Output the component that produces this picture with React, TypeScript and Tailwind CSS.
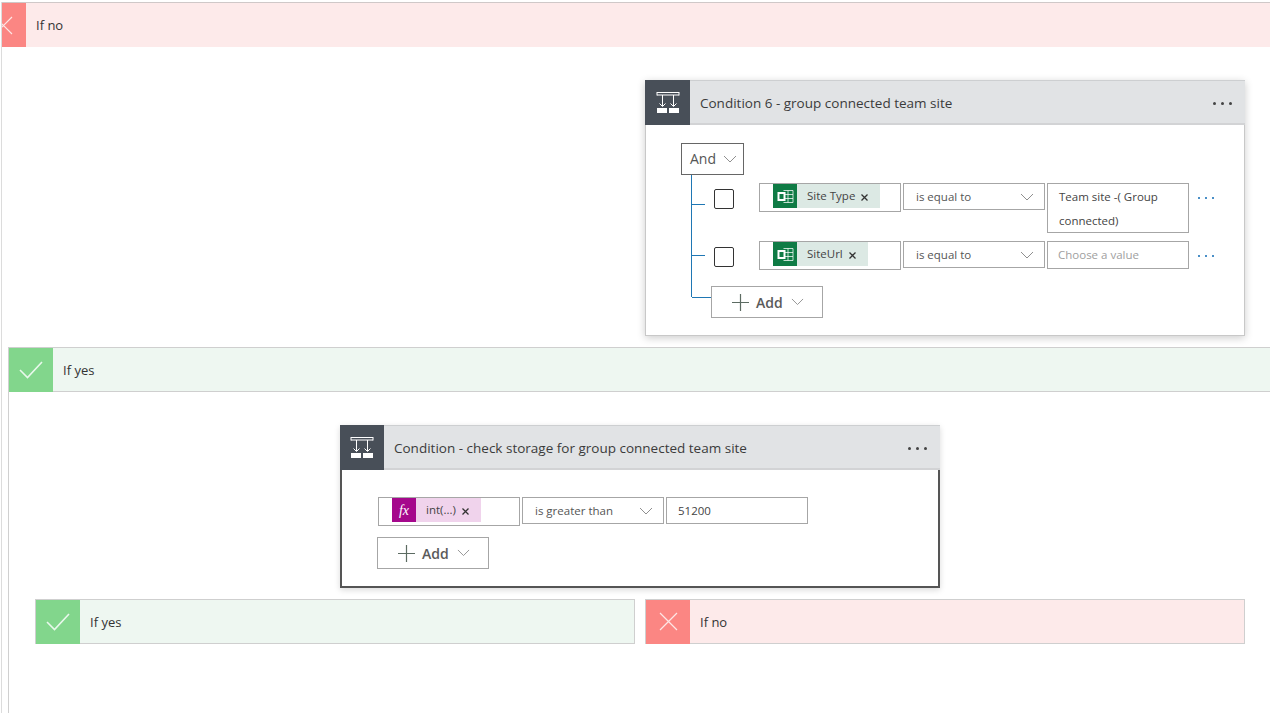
import React from 'react';

const ConditionIcon = () => (
  <svg width="24" height="24" viewBox="0 0 24 24" fill="none" stroke="#fff" strokeWidth="1">
    <path d="M1 1.500h22M1 4h22M1 1v3.500M23 1v3.500" />
    <path d="M6.500 4v11M17.500 4v11" />
    <path d="M3.500 12.500l3 3 3-3M14.500 12.500l3 3 3-3" />
    <rect x="1" y="17" width="10" height="5" fill="#fff" stroke="none" />
    <rect x="13" y="17" width="10" height="5" fill="#fff" stroke="none" />
  </svg>
);

const Chevron = ({ size = 14, color = '#8f8f8f' }: { size?: number; color?: string }) => (
  <svg width={size} height={size / 2 + 1} viewBox="0 0 14 8" fill="none" stroke={color} strokeWidth="1">
    <path d="M1 1l6 6 6-6" />
  </svg>
);

const Cross = ({ size = 19 }: { size?: number }) => (
  <svg width={size} height={size} viewBox="0 0 19 19" fill="none" stroke="#fde7e6" strokeWidth="1.200">
    <path d="M1 1l17 17M18 1L1 18" />
  </svg>
);

const Check = () => (
  <svg width="24" height="18" viewBox="0 0 24 18" fill="none" stroke="#e9f8ec" strokeWidth="1.600">
    <path d="M1 9l7.500 7.500L23 1" />
  </svg>
);

const ExcelIcon = () => (
  <svg width="17" height="15" viewBox="0 0 17 15" fill="none" stroke="#fff" strokeOpacity="0.75" strokeWidth="1">
    <path d="M6.500 1.500h9.500v12H6.500M11 1.500v12M6.500 5.500H16M6.500 9.500H16" />
    <rect x="0.500" y="3" width="8" height="9" fill="#fff" stroke="none" />
    <rect x="2.500" y="5" width="4" height="5" fill="#0f7b45" stroke="none" />
  </svg>
);

const Dots = ({ className }: { className: string }) => (
  <div className={`flex gap-[5px] ${className}`}>
    <span className="w-[3px] h-[3px] rounded-full bg-current" />
    <span className="w-[3px] h-[3px] rounded-full bg-current" />
    <span className="w-[3px] h-[3px] rounded-full bg-current" />
  </div>
);

const SmallDots = () => (
  <div className="flex gap-[5px] ml-[9px] mt-[14px] text-[#4a8fc7]">
    <span className="w-[2px] h-[2px] bg-current" />
    <span className="w-[2px] h-[2px] bg-current" />
    <span className="w-[2px] h-[2px] bg-current" />
  </div>
);

const Branch = ({ kind, className = '' }: { kind: 'yes' | 'no'; className?: string }) => (
  <div
    className={`h-[45px] flex items-center border-y border-[#cfcfcf] ${kind === 'yes' ? 'bg-[#eef7f1]' : 'bg-[#fdeaea]'} ${className}`}
  >
    <div className={`w-[44px] h-[44px] flex items-center justify-center shrink-0 ${kind === 'yes' ? 'bg-[#82d68c]' : 'bg-[#fb8683]'}`}>
      {kind === 'yes' ? <Check /> : <Cross />}
    </div>
    <span className="ml-[10px] mt-[2px] text-[13px] text-[#333]">{kind === 'yes' ? 'If yes' : 'If no'}</span>
  </div>
);

const CardHeader = ({ title, narrow = false }: { title: string; narrow?: boolean }) => (
  <div className="h-[45px] flex items-center bg-[#e1e3e5] shadow-[inset_0_1px_0_#cdcfd1,inset_0_-2px_0_#d2d3d5]">
    <div className={`${narrow ? 'w-[44px]' : 'w-[45px]'} h-[45px] bg-[#484f58] flex items-center justify-center shrink-0`}>
      <ConditionIcon />
    </div>
    <span className="ml-[10px] mt-[2px] text-[13.5px] text-[#3b3b3b]">{title}</span>
    <Dots className="ml-auto mr-[13px] mt-[2px] text-[#444]" />
  </div>
);

const TagInput = ({ kind, label }: { kind: 'excel' | 'fx'; label: string }) => (
  <div className="w-[142px] h-[29px] border border-[#a6a6a6] flex items-start pl-[13px] shrink-0">
    <div className={`h-[24px] flex items-center ${kind === 'excel' ? 'bg-[#dce9e4]' : 'bg-[#f0d3ec]'}`}>
      <div className={`w-[24px] h-[24px] flex items-center justify-center ${kind === 'excel' ? 'bg-[#0f7b45]' : 'bg-[#a5088c]'}`}>
        {kind === 'excel' ? (
          <ExcelIcon />
        ) : (
          <span className="font-['Liberation_Serif',serif] italic text-[14px] text-white">fx</span>
        )}
      </div>
      <span className="ml-[10px] text-[11.5px] text-[#444] leading-none">{label}</span>
      <svg className="ml-[6px] mr-[12px] mt-[2px]" width="7" height="7" viewBox="0 0 7 7" fill="none" stroke="#333" strokeWidth="1.300">
        <path d="M0.500 0.500l6 6M6.500 0.500l-6 6" />
      </svg>
    </div>
  </div>
);

const Operator = ({ label }: { label: string }) => (
  <div className="w-[142px] h-[27px] ml-[2px] border border-[#a6a6a6] flex items-center pl-[12px] pr-[10px] shrink-0">
    <span className="text-[11.5px] text-[#555] mt-[1px]">{label}</span>
    <span className="ml-auto">
      <Chevron />
    </span>
  </div>
);

const AddButton = () => (
  <div className="w-[112px] h-[32px] border border-[#a6a6a6] bg-white flex items-center pl-[20px]">
    <svg width="17" height="17" viewBox="0 0 17 17" fill="none" stroke="#5c6b62" strokeWidth="1.200">
      <path d="M8.500 0v17M0 8.500h17" />
    </svg>
    <span className="ml-[7px] text-[14px] font-semibold text-[#5a5a5a]">Add</span>
    <span className="ml-[8px]">
      <Chevron size={13} />
    </span>
  </div>
);

const Checkbox = () => (
  <div className="w-[20px] h-[20px] ml-[9px] mt-[6px] border border-[#333] rounded-[2px] shrink-0" />
);

const Tick = ({ className }: { className: string }) => (
  <div className={`w-[13px] h-px bg-[#1f77b4] shrink-0 ${className}`} />
);

export default function App() {
  return (
    <div className="w-[1270px] h-[713px] overflow-hidden bg-white pl-px font-['Open_Sans',sans-serif]">
      <div className="h-full border-l border-[#dcdcdc]">
        {/* outer If no, the icon is cut off by the scroll position */}
        <div className="mt-[2px] h-[45px] flex items-center bg-[#fdeaea] border-t border-[#cfc8c8]">
          <div className="w-[24px] h-[44px] bg-[#fb8683] flex items-center justify-end overflow-hidden shrink-0">
            <div className="w-[45px] flex items-center justify-center shrink-0">
              <Cross />
            </div>
          </div>
          <span className="ml-[10px] mt-[2px] text-[13px] text-[#333]">If no</span>
        </div>

        {/* Condition 6 */}
        <div className="w-[600px] mt-[33px] ml-[643px] shadow-[0_2px_8px_rgba(0,0,0,0.2)]">
          <CardHeader title="Condition 6 - group connected team site" />
          <div className="h-[211px] bg-white border-x border-b border-[#c8c8c8] pt-[18px]">
            <div className="w-[63px] h-[32px] ml-[35px] border border-[#666] flex items-center justify-between pl-[8px] pr-[6px]">
              <span className="text-[14px] text-[#555] -mt-[2px]">And</span>
              <Chevron />
            </div>
            <div className="ml-[45px] h-[122px] border-l border-[#1f77b4] pt-[8px]">
              <div className="flex items-start">
                <Tick className="mt-[21px]" />
                <Checkbox />
                <div className="ml-[25px] flex items-start">
                  <TagInput kind="excel" label="Site Type" />
                  <Operator label="is equal to" />
                  <div className="w-[142px] h-[50px] ml-[2px] border border-[#a6a6a6] pl-[11px] pt-px text-[11.5px] leading-[24px] text-[#444] shrink-0">
                    Team site -( Group connected)
                  </div>
                  <SmallDots />
                </div>
              </div>
              <div className="flex items-start mt-[8px]">
                <Tick className="mt-[14px]" />
                <Checkbox />
                <div className="ml-[25px] flex items-start">
                  <TagInput kind="excel" label="SiteUrl" />
                  <Operator label="is equal to" />
                  <div className="w-[142px] h-[28px] ml-[2px] border border-[#a6a6a6] pl-[10px] text-[11.5px] leading-[26px] text-[#a0a0a0] shrink-0">
                    Choose a value
                  </div>
                  <SmallDots />
                </div>
              </div>
              <div className="flex items-start mt-[16px]">
                <div className="w-[19px] h-px bg-[#1f77b4] mt-[11px] shrink-0" />
                <AddButton />
              </div>
            </div>
          </div>
        </div>

        {/* If yes branch */}
        <div className="mt-[11px] ml-[6px] h-[400px] border-l border-[#d0d0d0]">
          <Branch kind="yes" />
          <div className="w-[600px] mt-[33px] ml-[331px] shadow-[0_2px_6px_rgba(0,0,0,0.15)]">
            <CardHeader narrow title="Condition - check storage for group connected team site" />
            <div className="h-[118px] bg-white border-x-2 border-b-2 border-[#555] pt-[27px] pl-[36px]">
              <div className="flex items-start">
                <TagInput kind="fx" label="int(...)" />
                <Operator label="is greater than" />
                <div className="w-[142px] h-[27px] ml-[2px] border border-[#a6a6a6] pl-[11px] text-[11.5px] leading-[26px] text-[#444] shrink-0">
                  51200
                </div>
              </div>
              <div className="mt-[11px] -ml-px">
                <AddButton />
              </div>
            </div>
          </div>
          <div className="flex gap-[10px] mt-[11px] ml-[26px]">
            <Branch kind="yes" className="w-[600px] border-x" />
            <Branch kind="no" className="w-[600px] border-x" />
          </div>
        </div>
      </div>
    </div>
  );
}
